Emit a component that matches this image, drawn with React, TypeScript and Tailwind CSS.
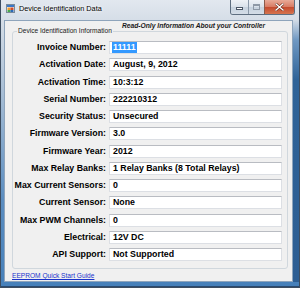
const rows: { label: string; value: string; selected?: boolean }[] = [
  { label: "Invoice Number:", value: "11111", selected: true },
  { label: "Activation Date:", value: "August, 9, 2012" },
  { label: "Activation Time:", value: "10:3:12" },
  { label: "Serial Number:", value: "222210312" },
  { label: "Security Status:", value: "Unsecured" },
  { label: "Firmware Version:", value: "3.0" },
  { label: "Firmware Year:", value: "2012" },
  { label: "Max Relay Banks:", value: "1 Relay Banks (8 Total Relays)" },
  { label: "Max Current Sensors:", value: "0" },
  { label: "Current Sensor:", value: "None" },
  { label: "Max PWM Channels:", value: "0" },
  { label: "Electrical:", value: "12V DC" },
  { label: "API Support:", value: "Not Supported" },
];

function AppIcon() {
  return (
    <svg width="9" height="9" viewBox="0 0 9 9" className="shrink-0">
      <rect x="0.5" y="0.5" width="8" height="8" fill="#f4f4f4" stroke="#7a8a9a" />
      <rect x="1" y="1" width="7" height="2" fill="#3a78c8" />
      <rect x="1.5" y="3.5" width="3" height="2.5" fill="#f09a2a" />
      <rect x="4.5" y="3.5" width="3" height="2.5" fill="#d04a2a" />
      <rect x="1.5" y="6" width="3" height="2" fill="#4aa84a" />
      <rect x="4.5" y="6" width="3" height="2" fill="#2a68b8" />
    </svg>
  );
}

function CaptionButtons() {
  return (
    <div className="flex h-[15px] overflow-hidden rounded-b-[3px] border border-t-0 border-[#5e6e80]">
      <div className="flex w-[18px] items-end justify-center border-r border-[#8a98a8] bg-[linear-gradient(180deg,#eef2f6_0%,#d9e1ea_50%,#c6d2de_51%,#d4dde7_100%)] pb-[4px]">
        <div className="h-[3px] w-[7px] border border-[#4a5666] bg-white" />
      </div>
      <div className="flex w-[16px] items-center justify-center border-r border-[#8a5a4a] bg-[linear-gradient(180deg,#eef2f6_0%,#d9e1ea_50%,#c6d2de_51%,#d4dde7_100%)]">
        <div className="h-[6px] w-[7px] border border-[#8e99a6] border-t-2 bg-transparent" />
      </div>
      <div className="flex w-[29px] items-center justify-center bg-[linear-gradient(180deg,#e8aa98_0%,#d77a62_50%,#c44a2e_51%,#d5744f_100%)]">
        <svg width="9" height="8" viewBox="0 0 9 8">
          <path d="M1 1 L8 7 M8 1 L1 7" stroke="#6a2a1a" strokeWidth="2.6" strokeLinecap="square" />
          <path d="M1 1 L8 7 M8 1 L1 7" stroke="#ffffff" strokeWidth="1.4" strokeLinecap="square" />
        </svg>
      </div>
    </div>
  );
}

export default function App() {
  return (
    <div
      className="flex h-[288px] w-[300px] flex-col overflow-hidden border border-t-0 border-[#3d4d60] bg-[linear-gradient(180deg,#e2e8ef_0px,#d3dce6_24px,#a9bfd6_90px,#5b8dc0_200px,#4680ba_100%)]"
      style={{ fontFamily: '"Liberation Sans", Arial, sans-serif' }}
    >
      <div className="flex h-[20px] shrink-0 items-start pl-[5px] pr-[4px]">
        <div className="mt-[4px]">
          <AppIcon />
        </div>
        <div className="ml-[4px] mt-[4px] text-[7.3px] leading-[9px] text-black [text-shadow:0_0_4px_#fff,0_0_2px_#fff]">
          Device Identification Data
        </div>
        <div className="flex-1" />
        <CaptionButtons />
      </div>
      <div className="flex flex-1">
        <div className="w-[3px]" />
        <div className="flex flex-1 flex-col border border-[#8ea4bb] bg-[#f0f0f0]">
          <div className="mb-[-3px] ml-[117px] h-[9px] text-[6.7px] font-bold italic leading-[9px] text-[#1a1a1a]">
            Read-Only Information About your Controller
          </div>
          <fieldset className="ml-[7px] mr-[4px] rounded-[3px] border border-[#d0d7dd] pb-[7px] pr-[5px] pt-[6px]">
            <legend className="ml-[4px] px-[1px] text-[6.6px] leading-[8px] text-[#1a1a1a]">
              Device Identification Information
            </legend>
            <div className="flex flex-col gap-[4.25px]">
              {rows.map((row) => (
                <div key={row.label} className="flex h-[13px] items-center">
                  <div className="w-[93px] shrink-0 text-right text-[8.8px] font-bold leading-[13px] text-black">
                    {row.label}
                  </div>
                  <div className="ml-[3px] flex h-[13px] flex-1 items-center border border-[#dcdfe4] border-t-[#b9bcc2] bg-white pl-[2px] text-[8.8px] font-bold leading-[11px] text-black">
                    {row.selected ? (
                      <span className="bg-[#3399ff] px-[1px] text-white">{row.value}</span>
                    ) : (
                      <span className="pl-[1px]">{row.value}</span>
                    )}
                  </div>
                </div>
              ))}
            </div>
          </fieldset>
          <a
            href="#"
            className="ml-[7px] mt-[3px] w-fit text-[6.6px] leading-[8px] text-[#1a33cc] underline"
          >
            EEPROM Quick Start Guide
          </a>
        </div>
        <div className="w-[6px] bg-[linear-gradient(180deg,#d3dce6_0px,#6f98c2_20px,#2f6398_60px,#2d5e93_100%)]" />
      </div>
      <div className="h-[5px] shrink-0 border-b border-[#2a4a70]" />
    </div>
  );
}
